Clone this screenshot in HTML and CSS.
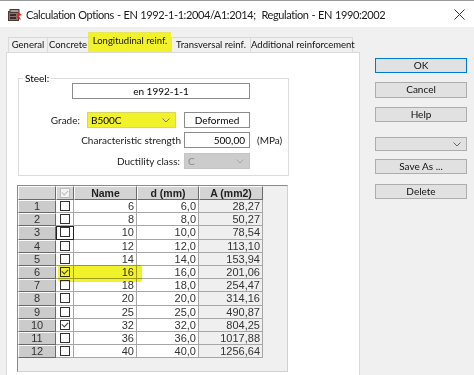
FILE: index.html
```html
<!DOCTYPE html>
<html lang="en">

<head>
    <meta charset="UTF-8">
    <title>Calculation Options</title>
    <link rel="stylesheet" href="styles.css">
</head>

<body>
    <div class="titlebar">
        <svg class="app-icon" width="14" height="12" viewBox="0 0 14 12">
            <rect x="0.5" y="2.5" width="10" height="9" fill="#8a7070" stroke="#4a3a3a"/>
            <rect x="2" y="0.5" width="9" height="3" fill="#b09a9a" stroke="#4a3a3a"/>
            <rect x="2" y="5" width="6" height="2" fill="#3b2b2b"/>
            <rect x="2" y="8" width="6" height="2" fill="#3b2b2b"/>
            <path d="M10 3 L14 6 L11 7 L13 11 L9 9 Z" fill="#e02424"/>
        </svg>
        <span class="title">Calculation Options - EN 1992-1-1:2004/A1:2014;&nbsp; Regulation - EN 1990:2002</span>
        <svg class="close" width="11" height="11" viewBox="0 0 11 11">
            <path d="M0.5 0.5 L10.5 10.5 M10.5 0.5 L0.5 10.5" stroke="#333" stroke-width="1"/>
        </svg>
    </div>

    <div class="main">
        <div class="left">
            <div class="tabs">
                <div class="tab tab-general">General</div>
                <div class="tab tab-concrete">Concrete</div>
                <div class="tab tab-active">Longitudinal reinf.</div>
                <div class="tab tab-trans">Transversal reinf.</div>
                <div class="tab tab-add">Additional reinforcement</div>
            </div>

            <div class="panel">
                <div class="group">
                    <span class="group-title">Steel:</span>
                    <div class="std-box">en 1992-1-1</div>

                    <div class="row row-grade">
                        <span class="lbl lbl-grade">Grade:</span>
                        <div class="select select-grade">
                            <span>B500C</span>
                            <svg class="chev" width="8" height="5" viewBox="0 0 8 5"><path d="M0.5 0.5 L4 4 L7.5 0.5" fill="none" stroke="#777"/></svg>
                        </div>
                        <div class="box box-deformed">Deformed</div>
                    </div>

                    <div class="row row-strength">
                        <span class="lbl lbl-strength">Characteristic strength</span>
                        <div class="box box-value">500,00</div>
                        <span class="unit">(MPa)</span>
                    </div>

                    <div class="row row-ductility">
                        <span class="lbl lbl-ductility">Ductility class:</span>
                        <div class="select select-disabled">
                            <span>C</span>
                            <svg class="chev" width="8" height="5" viewBox="0 0 8 5"><path d="M0.5 0.5 L4 4 L7.5 0.5" fill="none" stroke="#aaa"/></svg>
                        </div>
                    </div>
                </div>

                <div class="grid">
                    <div class="table" id="table">
                        <div class="hd corner"></div>
                        <div class="hd hd-check"><span class="cb cb-disabled"></span></div>
                        <div class="hd">Name</div>
                        <div class="hd">d (mm)</div>
                        <div class="hd">A (mm2)</div>
                    </div>
                    <div class="marker"></div>
                </div>
            </div>
        </div>

        <div class="side">
            <div class="btn btn-ok">OK</div>
            <div class="btn btn-cancel">Cancel</div>
            <div class="btn btn-help">Help</div>
            <div class="btn btn-combo">
                <svg class="chev" width="8" height="5" viewBox="0 0 8 5"><path d="M0.5 0.5 L4 4 L7.5 0.5" fill="none" stroke="#666"/></svg>
            </div>
            <div class="btn btn-save">Save As ...</div>
            <div class="btn btn-delete">Delete</div>
        </div>
    </div>

    <script>
        // bar diameters with their areas
        const bars = [
            [6, '6,0', '28,27', false],
            [8, '8,0', '50,27', false],
            [10, '10,0', '78,54', false],
            [12, '12,0', '113,10', false],
            [14, '14,0', '153,94', false],
            [16, '16,0', '201,06', true],
            [18, '18,0', '254,47', false],
            [20, '20,0', '314,16', false],
            [25, '25,0', '490,87', false],
            [32, '32,0', '804,25', true],
            [36, '36,0', '1017,88', false],
            [40, '40,0', '1256,64', false]
        ];
        const table = document.getElementById('table');
        bars.forEach((bar, i) => {
            const focus = i === 2 ? ' focus' : '';
            const checked = bar[3] ? ' cb-checked' : '';
            table.insertAdjacentHTML('beforeend', `
                <div class="rh">${i + 1}</div>
                <div class="cell cell-check${focus}"><span class="cb${checked}"></span></div>
                <div class="cell">${bar[0]}</div>
                <div class="cell">${bar[1]}</div>
                <div class="cell cell-ro">${bar[2]}</div>
            `);
        });
    </script>
</body>

</html>
```

FILE: styles.css
```css
body {
    margin: 0;
    width: 474px;
    height: 375px;
    overflow: hidden;
    background-color: #f0f0f0;
    font-family: Lato, 'Noto Sans', sans-serif;
    font-size: 10px;
    color: #000;
}

.titlebar {
    height: 27px;
    box-sizing: border-box;
    border-top: 1px solid #9a9a9a;
    background-color: #fff;
    display: flex;
    align-items: center;
    padding-left: 8px;
}

.app-icon {
    margin-right: 4px;
    margin-top: 1px;
}

.title {
    font-size: 11px;
    letter-spacing: -0.4px;
    word-spacing: 0.5px;
    color: #1a1a1a;
    white-space: nowrap;
    margin-top: 1px;
}

.close {
    margin-left: auto;
    margin-right: 9px;
    margin-top: 1px;
}

.main {
    display: flex;
}

.left {
    width: 360px;
    padding-left: 6px;
    box-sizing: border-box;
}

/* tab strip */
.tabs {
    display: flex;
    align-items: flex-end;
    margin-top: 5px;
    margin-left: 2px;
    height: 20px;
}

.tab {
    height: 15px;
    line-height: 14px;
    box-sizing: border-box;
    border: 1px solid #d9d9d9;
    border-bottom: none;
    border-right: none;
    text-align: center;
    white-space: nowrap;
    background-color: #f0f0f0;
    font-size: 9.5px;
    color: #111;
}

.tab-general { width: 39px; }
.tab-concrete { width: 41px; }
.tab-trans { width: 79px; }
.tab-add { width: 103px; border-right: 1px solid #d9d9d9; }

.tab-active {
    width: 83px;
    height: 20px;
    line-height: 16px;
    background-color: #f2f22a;
    border-color: #e8e85a;
}

.panel {
    width: 354px;
    height: 323px;
    box-sizing: border-box;
    background-color: #fff;
    border: 1px solid #d9d9d9;
    border-bottom: none;
    padding-left: 10px;
    padding-top: 25px;
}

/* steel group */
.group {
    position: relative;
    margin-left: 1px;
    width: 271px;
    height: 98px;
    box-sizing: border-box;
    border: 1px solid #dcdcdc;
}

.group-title {
    position: absolute;
    top: -8px;
    left: 4px;
    padding: 0 2px;
    background-color: #fff;
    line-height: 14px;
}

.std-box {
    margin-top: 4px;
    margin-left: 53px;
    width: 178px;
    height: 16px;
    line-height: 14px;
    box-sizing: border-box;
    border: 1px solid #8c8c8c;
    text-align: center;
}

.row {
    display: flex;
    align-items: center;
    height: 16px;
}

.row-grade { margin-top: 13px; }
.row-strength { margin-top: 4px; }
.row-ductility { margin-top: 5px; }

.lbl {
    text-align: right;
    white-space: nowrap;
    color: #222;
}

.lbl-grade { width: 61px; margin-right: 7px; }
.lbl-strength { width: 162px; margin-right: 3px; }
.lbl-ductility { width: 161px; margin-right: 4px; }

.box {
    height: 16px;
    line-height: 14px;
    box-sizing: border-box;
    border: 1px solid #8c8c8c;
    background-color: #fff;
}

.box-deformed {
    width: 66px;
    margin-left: 8px;
    text-align: center;
}

.box-value {
    width: 66px;
    text-align: right;
    padding-right: 4px;
}

.unit {
    margin-left: 7px;
    color: #222;
}

.select {
    height: 16px;
    box-sizing: border-box;
    display: flex;
    align-items: center;
    justify-content: space-between;
    padding: 0 5px 0 3px;
}

.select-grade {
    width: 89px;
    background-color: #f2f22a;
    border: 1px solid #d8d860;
}

.select-disabled {
    width: 66px;
    background-color: #cccccc;
    border: 1px solid #c4c4c4;
    color: #8a8a8a;
}

/* bar table */
.grid {
    position: relative;
    margin-top: 9px;
    width: 271px;
    height: 187px;
    box-sizing: border-box;
    border: 1px solid #8a8a8a;
    border-right-color: #d0d0d0;
    border-bottom-color: #d0d0d0;
    background-color: #f0f0f0;
}

.table {
    display: grid;
    grid-template-columns: 38px 18px 63px 62px 64px;
    grid-template-rows: 14px repeat(12, 13.2px);
    width: 245px;
    font-family: 'Liberation Sans', Arial, sans-serif;
    font-size: 11px;
    color: #333;
}

.hd,
.rh {
    box-sizing: border-box;
    background-color: #cbcbcb;
    border-top: 1px solid #fafafa;
    border-left: 1px solid #fafafa;
    border-right: 1px solid #6a6a6a;
    border-bottom: 1px solid #6a6a6a;
    text-align: center;
    line-height: 12px;
    overflow: hidden;
}

.hd {
    font-weight: bold;
    font-size: 10.5px;
    background-color: #d4d4d4;
    color: #222;
}

.rh {
    line-height: 11px;
}

.hd-check {
    display: flex;
    align-items: center;
    justify-content: center;
}

.cell {
    box-sizing: border-box;
    background-color: #fff;
    border-right: 1px solid #a6a6a6;
    border-bottom: 1px solid #a6a6a6;
    text-align: right;
    padding-right: 2px;
    line-height: 12px;
    overflow: hidden;
}

.cell-ro {
    background-color: #efefef;
}

.cell-check {
    display: flex;
    align-items: center;
    justify-content: center;
    padding: 0;
}

.focus {
    outline: 1px solid #222;
    outline-offset: -1px;
}

.cb {
    position: relative;
    width: 10px;
    height: 10px;
    box-sizing: border-box;
    border: 1px solid #333;
    background-color: #fff;
}

.cb-checked::after,
.cb-disabled::after {
    content: "";
    position: absolute;
    left: 2px;
    top: 0px;
    width: 3px;
    height: 5px;
    border-right: 1px solid #444;
    border-bottom: 1px solid #444;
    transform: rotate(45deg);
}

.cb-disabled {
    border-color: #bdbdbd;
    background-color: #f4f4f4;
}

.cb-disabled::after {
    border-color: #bdbdbd;
}

/* highlighter stroke over row 6 */
.marker {
    position: absolute;
    left: 40px;
    top: 79px;
    width: 84px;
    height: 17px;
    background-color: #f2f22a;
    mix-blend-mode: multiply;
    border-radius: 2px;
}

/* right side buttons */
.side {
    flex: 1;
    padding-left: 15px;
    padding-top: 31px;
}

.btn {
    width: 92px;
    height: 15px;
    line-height: 13px;
    box-sizing: border-box;
    background-color: #e1e1e1;
    border: 1px solid #adadad;
    text-align: center;
    color: #111;
}

.btn-ok {
    border-color: #0078d7;
    box-shadow: inset 0 0 0 1px #cfe3f5;
}

.btn-cancel { margin-top: 9px; height: 16px; }
.btn-help { margin-top: 9px; }
.btn-save { margin-top: 8px; }
.btn-delete { margin-top: 10px; }

.btn-combo {
    margin-top: 15px;
    height: 14px;
    display: flex;
    align-items: center;
    justify-content: flex-end;
    padding-right: 5px;
}
```
